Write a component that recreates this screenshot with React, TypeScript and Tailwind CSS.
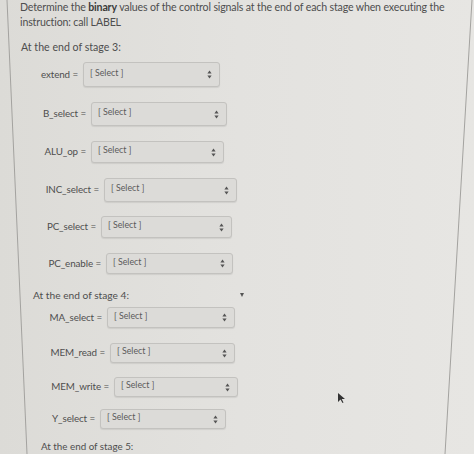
import React from "react";

type Row = {
  label: string;
  mt: string;
  h: string;
  lw: string;
  sw: string;
};

const Arrows = () => (
  <svg width="5" height="9" viewBox="0 0 5 9" className="shrink-0">
    <path d="M2.5 0.5 L4.6 3.6 L0.4 3.6 Z" fill="#555" />
    <path d="M2.5 8.5 L4.6 5.4 L0.4 5.4 Z" fill="#555" />
  </svg>
);

const SelectRow = ({ r }: { r: Row }) => (
  <div className={`flex items-center ${r.mt} ${r.h}`}>
    <span className={`${r.lw} shrink-0 text-right text-[9.8px] tracking-[-0.1px] leading-none whitespace-nowrap`}>
      {r.label}
    </span>
    <div
      className={`ml-[5px] ${r.sw} h-full flex items-center justify-between pl-[6px] pr-[7px] rounded-[3px] border border-[#c3c2bf] bg-[#dcdbd8] shadow-[0_1px_1px_rgba(0,0,0,0.08)]`}
    >
      <span className="text-[8.8px] leading-none text-[#5a5a5a] -mt-[3px] whitespace-nowrap">[ Select ]</span>
      <Arrows />
    </div>
  </div>
);

export default function App() {
  const stage3: Row[] = [
    { label: "extend =", mt: "mt-[7px]", h: "h-[25px]", lw: "w-[78px]", sw: "w-[137px]" },
    { label: "B_select =", mt: "mt-[15px]", h: "h-[24px]", lw: "w-[86px]", sw: "w-[136px]" },
    { label: "ALU_op =", mt: "mt-[15px]", h: "h-[22px]", lw: "w-[86px]", sw: "w-[133px]" },
    { label: "INC_select =", mt: "mt-[15px]", h: "h-[24px]", lw: "w-[99px]", sw: "w-[133px]" },
    { label: "PC_select =", mt: "mt-[14px]", h: "h-[22px]", lw: "w-[96px]", sw: "w-[131px]" },
    { label: "PC_enable =", mt: "mt-[15px]", h: "h-[21px]", lw: "w-[101px]", sw: "w-[127px]" },
  ];
  const stage4: Row[] = [
    { label: "MA_select =", mt: "mt-[4px]", h: "h-[21px]", lw: "w-[102px]", sw: "w-[128px]" },
    { label: "MEM_read =", mt: "mt-[15px]", h: "h-[20px]", lw: "w-[105px]", sw: "w-[125px]" },
    { label: "MEM_write =", mt: "mt-[14px]", h: "h-[20px]", lw: "w-[109px]", sw: "w-[124px]" },
    { label: "Y_select =", mt: "mt-[12px]", h: "h-[20px]", lw: "w-[95px]", sw: "w-[126px]" },
  ];

  return (
    <div className="relative w-[474px] h-[454px] overflow-hidden bg-gradient-to-r from-[#dcdbd7] via-[#e3e2df] to-[#e7e6e3] text-[#4e4e4e] font-['Lato','Liberation_Sans',sans-serif]">
      <div className="flex flex-col">
        <div className="pl-[20px] w-[465px] text-[10.6px] tracking-[-0.15px] leading-[15px]">
          <p>
            Determine the <b className="font-bold text-[#3a3a3a]">binary</b> values of the control signals at the end of each stage when executing the instruction: call LABEL
          </p>
        </div>
        <div className="pl-[21px] mt-[10px] text-[10.6px] leading-[15px]">At the end of stage 3:</div>
        {stage3.map((r) => (
          <SelectRow key={r.label} r={r} />
        ))}
        <div className="pl-[33px] mt-[14px] text-[10.2px] leading-[15px]">At the end of stage 4:</div>
        {stage4.map((r) => (
          <SelectRow key={r.label} r={r} />
        ))}
        <div className="pl-[41px] mt-[10px] text-[9.8px] leading-[15px]">At the end of stage 5:</div>
      </div>

      <svg className="absolute inset-0 pointer-events-none" width="474" height="454" viewBox="0 0 474 454">
        <line x1="7" y1="0" x2="27" y2="454" stroke="#a3a29f" strokeWidth="1" />
        <line x1="472" y1="0" x2="445" y2="454" stroke="#a3a29f" strokeWidth="1" />
        <path d="M240 293 L244 293 L242 297 Z" fill="#555" />
        <path d="M338 393 L338 402 L340.5 399.5 L342.5 403 L343.5 402.5 L341.7 399 L345 399 Z" fill="#333" />
      </svg>
    </div>
  );
}
